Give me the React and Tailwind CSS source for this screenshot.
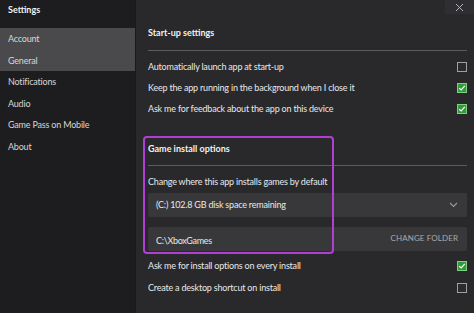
import React from "react"

const font = { fontFamily: 'Lato, "Noto Sans", sans-serif' }

function Check({ on }) {
  if (!on) {
    return <div className="w-[10px] h-[10px] border border-[#a0a0a0] bg-[#2b2b2e]" />
  }
  return (
    <div className="w-[10px] h-[10px] bg-[#2f9b3a] border border-[#7fd07f] flex items-center justify-center">
      <svg width="8" height="8" viewBox="0 0 8 8">
        <path d="M1.2 4.2 L3.2 6 L6.8 1.8" stroke="white" strokeWidth="1.2" fill="none" />
      </svg>
    </div>
  )
}

function Row({ label, on, h = "h-[21px]" }) {
  return (
    <div className={`${h} flex items-center justify-between`}>
      <span className="text-[9px] tracking-[-0.2px] text-[#e8e8e8]">{label}</span>
      <Check on={on} />
    </div>
  )
}

export default function App() {
  const items = ["Account", "General", "Notifications", "Audio", "Game Pass on Mobile", "About"]

  return (
    <div className="relative w-[474px] h-[313px] flex overflow-hidden" style={font}>
      {/* sidebar */}
      <div className="w-[135px] bg-[#1d1d20] flex flex-col">
        <div className="h-[28px] px-2 pt-[3px] text-[9px] font-bold text-[#f0f0f0]">Settings</div>
        {items.map((it, i) => (
          <div
            key={it}
            className={`h-[21.6px] px-2 flex items-center text-[9px] tracking-[-0.2px] text-[#d6d6d6] ${i < 2 ? "bg-[#4a4a4d]" : ""}`}
          >
            {it}
          </div>
        ))}
      </div>

      {/* main */}
      <div className="flex-1 bg-[#29292c] pl-3 pr-[7px] flex flex-col border-l border-[#1a1a1c]">
        <div className="h-[24px]" />
        <div className="h-[18px] flex items-center text-[9px] font-bold text-[#f2f2f2]">Start-up settings</div>
        <div className="mt-[8px] h-px bg-[#5c5c5f]" />
        <div className="mt-[5px]">
          <Row label="Automatically launch app at start-up" on={false} />
          <Row label="Keep the app running in the background when I close it" on />
          <Row label="Ask me for feedback about the app on this device" on />
        </div>

        <div className="mt-[21px] h-[18px] flex items-center text-[9px] font-bold text-[#f2f2f2]">Game install options</div>
        <div className="mt-[7px] h-px bg-[#5c5c5f]" />
        <div className="mt-[7px] h-[18px] flex items-center text-[9px] tracking-[-0.2px] text-[#e8e8e8]">
          Change where this app installs games by default
        </div>
        <div className="mt-[2px] h-[24px] bg-[#38383b] rounded-[2px] px-2 flex items-center justify-between">
          <span className="text-[9px] tracking-[-0.2px] text-[#e8e8e8]">(C:) 102.8 GB disk space remaining</span>
          <svg width="9" height="6" viewBox="0 0 9 6" className="mr-[1px]">
            <path d="M1 1 L4.5 4.5 L8 1" stroke="#9a9a9a" strokeWidth="1.1" fill="none" />
          </svg>
        </div>
        <div className="mt-[10px] h-[24px] bg-[#38383b] rounded-[2px] px-2 flex items-center justify-between">
          <span className="text-[9px] tracking-[-0.3px] text-[#e8e8e8] pt-[3px]">C:\XboxGames</span>
          <span className="text-[8px] text-[#a9a9a9] tracking-[0.1px] mr-[1px] pb-[3px]">CHANGE FOLDER</span>
        </div>
        <div className="mt-[4px]">
          <Row label="Ask me for install options on every install" on h="h-[22px]" />
          <Row label="Create a desktop shortcut on install" on={false} h="h-[22px]" />
        </div>
      </div>

      {/* close button */}
      <div className="absolute top-0 right-0 w-[29px] h-[14px] bg-[#2f2f33] flex items-center justify-center">
        <svg width="9" height="9" viewBox="0 0 9 9">
          <path d="M1 1 L8 8 M8 1 L1 8" stroke="#b5b5b5" strokeWidth="1" />
        </svg>
      </div>

      {/* highlight annotation */}
      <div className="absolute left-[143px] top-[136px] w-[191px] h-[118px] border-2 border-[#b13fd6] rounded-[4px]" />
    </div>
  )
}
